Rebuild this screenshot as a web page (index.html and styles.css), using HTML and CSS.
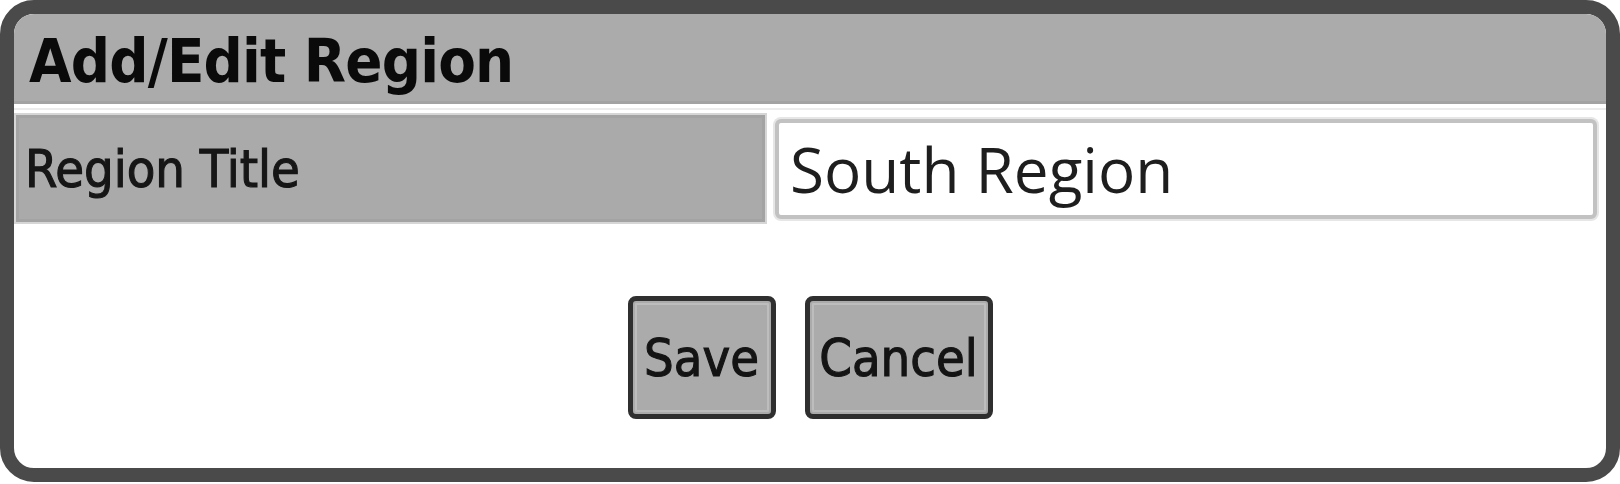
FILE: index.html
```html
<!DOCTYPE html>
<html>
<head>
<meta charset="utf-8">
<link rel="stylesheet" href="styles.css">
</head>
<body>
<div class="dialog">
  <div class="dialog-header">Add/Edit Region</div>
  <div class="form-row">
    <div class="form-label">Region Title</div>
    <div class="form-field"><input class="text-input" type="text" value="South Region"></div>
  </div>
  <div class="actions">
    <button class="btn btn-save">Save</button>
    <button class="btn btn-cancel">Cancel</button>
  </div>
</div>
</body>
</html>
```

FILE: styles.css
```css
html, body {
  margin: 0;
  padding: 0;
  background: #ffffff;
}

.dialog {
  box-sizing: border-box;
  width: 1620px;
  height: 482px;
  border: 14px solid #4a4a4a;
  border-radius: 34px;
  background: #ffffff;
  overflow: hidden;
  display: flex;
  flex-direction: column;
  font-family: "DejaVu Sans Condensed", "DejaVu Sans", sans-serif;
  font-stretch: condensed;
  color: #111;
}

.dialog-header {
  box-sizing: border-box;
  height: 90px;
  background: #ababab;
  border-bottom: 3px solid #a2a2a2;
  padding: 7px 0 0 15px;
  font-weight: bold;
  font-size: 61px;
  line-height: 80px;
  letter-spacing: -0.8px;
  color: #0a0a0a;
}

.form-row {
  display: flex;
  align-items: center;
  gap: 10px;
  margin-top: 4px;
  padding: 5px 9px 0 2px;
  border-top: 2px solid #ececec;
}

.form-label {
  box-sizing: border-box;
  width: 749px;
  height: 107px;
  background: #aaaaaa;
  border: 3px solid #a3a3a3;
  box-shadow: 0 0 0 2px #d6d6d6;
  display: flex;
  align-items: center;
  padding-left: 6px;
  font-size: 52px;
  color: #161616;
  -webkit-text-stroke: 1.1px #161616;
}

.form-field {
  flex: 1;
  display: flex;
}

.text-input {
  box-sizing: border-box;
  width: 100%;
  height: 100px;
  margin: 0;
  border: 4px solid #c2c2c2;
  border-radius: 6px;
  box-shadow: 0 0 0 2px #e6e6e6;
  background: #ffffff;
  padding: 0 0 0 11px;
  font-family: "Open Sans", sans-serif;
  font-size: 62px;
  color: #1e1e1e;
  outline: none;
}

.actions {
  display: flex;
  justify-content: center;
  gap: 29px;
  margin-top: 74px;
}

.btn {
  box-sizing: border-box;
  height: 123px;
  margin: 0;
  padding: 0;
  border: 5px solid #2f2f2f;
  border-radius: 8px;
  background: #ababab;
  box-shadow: inset 0 0 0 2px #ababab, inset 0 0 0 4px #bdbdbd;
  font-family: "DejaVu Sans Condensed", "DejaVu Sans", sans-serif;
  font-stretch: condensed;
  font-size: 52px;
  color: #141414;
  -webkit-text-stroke: 1.1px #141414;
}

.btn-save {
  width: 148px;
}

.btn-cancel {
  width: 188px;
}
```
